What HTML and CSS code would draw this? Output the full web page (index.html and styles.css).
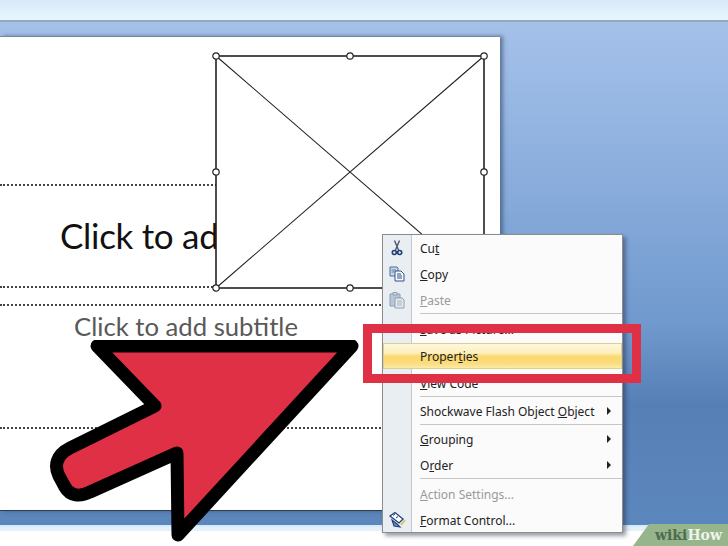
FILE: index.html
```html
<!DOCTYPE html>
<html lang="en">
<head>
<meta charset="utf-8">
<title>Properties menu</title>
<link rel="stylesheet" href="styles.css">
</head>
<body>
<div class="stage">
  <div class="topbar"></div>
  <div class="workspace">
    <div class="slide">
      <div class="placeholder title"><span>Click to add title</span></div>
      <div class="placeholder subtitle"><span>Click to add subtitle</span></div>
      <svg class="object" viewBox="0 0 280 244" aria-hidden="true">
        <rect x="6" y="6" width="268" height="232" fill="#fff" stroke="#222" stroke-width="1.6"/>
        <path d="M6 6 274 238M274 6 6 238" stroke="#222" stroke-width="1.1" fill="none"/>
        <g fill="#fff" stroke="#222" stroke-width="1.2">
          <circle cx="6" cy="6" r="3.2"/><circle cx="140" cy="6" r="3.2"/><circle cx="274" cy="6" r="3.2"/>
          <circle cx="6" cy="122" r="3.2"/><circle cx="274" cy="122" r="3.2"/>
          <circle cx="6" cy="238" r="3.2"/><circle cx="140" cy="238" r="3.2"/><circle cx="274" cy="238" r="3.2"/>
        </g>
      </svg>
    </div>
  </div>
  <div class="statusbar"></div>

  <div class="menu">
    <div class="row">
      <span class="icon"><svg viewBox="0 0 18 18" width="18" height="18"><path d="M6.5 1.5 10.5 11M11.5 1.5 7.5 11" stroke="#4c5867" stroke-width="1.4" fill="none"/><circle cx="6.3" cy="13.5" r="2" fill="none" stroke="#1d3a78" stroke-width="1.6"/><circle cx="11.7" cy="13.5" r="2" fill="none" stroke="#1d3a78" stroke-width="1.6"/></svg></span>
      <span class="label">Cu<u>t</u></span>
    </div>
    <div class="row">
      <span class="icon"><svg viewBox="0 0 18 18" width="18" height="18"><path d="M2 2H9L10 3V11H2Z" fill="#c9d8ea" stroke="#4f6c94"/><path d="M3.5 5H8M3.5 7H6" stroke="#5f7ba3"/><path d="M7 6H13L16 9V16H7Z" fill="#f6f9fd" stroke="#2f5289"/><path d="M9 9H13M9 11H14M9 13H14" stroke="#2f5289"/></svg></span>
      <span class="label"><u>C</u>opy</span>
    </div>
    <div class="row disabled">
      <span class="icon"><svg viewBox="0 0 18 18" width="18" height="18"><path d="M2 3H12V15H2Z" fill="#b9c6d6" stroke="#8d9db1"/><path d="M5 1.5H9V4H5Z" fill="#d8dfe8" stroke="#8d9db1"/><path d="M7 7H14L16 9V17H7Z" fill="#e6ebf1" stroke="#8d9db1"/><path d="M9 10H14M9 12H14M9 14H14" stroke="#a3b1c2"/></svg></span>
      <span class="label"><u>P</u>aste</span>
    </div>
    <div class="sep sep-wide"></div>
    <div class="row">
      <span class="icon"></span>
      <span class="label"><u>S</u>ave as Picture...</span>
    </div>
    <div class="row active">
      <span class="icon"></span>
      <span class="label">Proper<u>t</u>ies</span>
    </div>
    <div class="row after-active">
      <span class="icon"></span>
      <span class="label"><u>V</u>iew Code</span>
    </div>
    <div class="sep"></div>
    <div class="row">
      <span class="icon"></span>
      <span class="label">Shockwave Flash Object <u>O</u>bject</span>
      <span class="caret"></span>
    </div>
    <div class="sep"></div>
    <div class="row">
      <span class="icon"></span>
      <span class="label"><u>G</u>rouping</span>
      <span class="caret"></span>
    </div>
    <div class="row">
      <span class="icon"></span>
      <span class="label">O<u>r</u>der</span>
      <span class="caret"></span>
    </div>
    <div class="sep sep-wide"></div>
    <div class="row disabled">
      <span class="icon"></span>
      <span class="label"><u>A</u>ction Settings...</span>
    </div>
    <div class="row">
      <span class="icon"><svg viewBox="0 0 18 18" width="18" height="18"><path d="M2 5 7 1.5 15 8 11 12Z" fill="#fff" stroke="#1f3f7c" stroke-width="1.3"/><path d="M4 9 9 13 12 16 6 15Z" fill="#6f8fc4" stroke="#1f3f7c" stroke-width="1.1"/><path d="M5 4.5 7 3M8 7l2-1.5" stroke="#1f3f7c"/><path d="M13 14 17 9" stroke="#d9c24a" stroke-width="1.8"/></svg></span>
      <span class="label"><u>F</u>ormat Control...</span>
    </div>
  </div>

  <div class="callout"></div>

  <svg class="arrow" viewBox="0 0 320 210" aria-hidden="true">
    <path d="M57 6H312L138 195 137 113 50 152C40 157 30 156 25 147L19 136C14 126 16 115 30 108L115 66Z" fill="#e03046" stroke="#000" stroke-width="13" stroke-linejoin="round"/>
  </svg>

  <div class="badge"><span class="wiki">wiki</span><span class="how">How</span></div>
</div>
</body>
</html>
```
FILE: styles.css
```css
* { box-sizing: border-box; }
html, body { margin: 0; padding: 0; background: #fff; }

.stage {
  position: relative;
  width: 728px;
  height: 546px;
  overflow: hidden;
  display: flex;
  flex-direction: column;
  font-family: "Noto Sans", sans-serif;
}

.topbar {
  height: 22px;
  flex: none;
  background: linear-gradient(180deg, #d8e8f7 0%, #e8f7fe 100%);
  border-bottom: 2px solid #8eabc0;
}

.workspace {
  height: 503px;
  flex: none;
  padding-top: 14px;
  background: linear-gradient(180deg, #a5c1ea 0%, #94b5e2 20%, #7099cd 60%, #567fb6 76%, #5c87bc 100%);
}

.slide {
  position: relative;
  width: 500px;
  height: 475px;
  padding-top: 147px;
  background: #fff;
  border-top: 1px solid #75899f;
  border-bottom: 1px solid #2e3c55;
  box-shadow: 3px 0 4px rgba(40, 60, 90, 0.55);
}

.placeholder {
  width: 100%;
  border-top: 2px dotted #444;
  border-bottom: 2px dotted #444;
  white-space: nowrap;
  overflow: hidden;
  font-family: Lato, sans-serif;
}

.title {
  width: 400px;
  height: 104px;
  display: flex;
  align-items: center;
  padding: 0 0 2px 60px;
  font-size: 35px;
  letter-spacing: -0.3px;
  color: #111;
}

.subtitle {
  height: 125px;
  margin-top: 16px;
  padding-left: 74px;
  padding-top: 2px;
  font-size: 25.7px;
  line-height: 36px;
  color: #595959;
}

.object {
  position: absolute;
  left: 210px;
  top: 13px;
  width: 280px;
  height: 244px;
  overflow: visible;
}

.statusbar {
  flex: 1;
  background: #fff;
  border-top: 2px solid #d6ebfb;
  box-shadow: inset 0 4px 0 #e4f1fb;
}

.menu {
  position: absolute;
  left: 382px;
  top: 234px;
  width: 241px;
  height: 299px;
  background: linear-gradient(90deg, #e9eef2 28px, #c6c9cc 28px, #c6c9cc 29px, #fbfbfb 29px);
  border: 1px solid #8c8c8c;
  box-shadow: 3px 3px 4px rgba(30, 40, 60, 0.45);
  font-size: 12px;
  color: #222;
}

.row {
  display: flex;
  align-items: center;
  height: 26px;
}

.icon {
  width: 28px;
  height: 26px;
  flex: none;
  padding-right: 1px;
  display: flex;
  align-items: center;
  justify-content: center;
}

.label {
  flex: 1;
  padding-left: 9px;
  white-space: nowrap;
}

.disabled .label { color: #9a9a9a; }

.active {
  margin-top: 1px;
  background: linear-gradient(180deg, #fdf8e0 0%, #fdf0bc 38%, #fbd96f 52%, #fbdc7e 78%, #fcedae 100%);
  box-shadow: inset 0 0 0 1px #dccf96;
}

.after-active { margin-top: 1px; }

.caret {
  width: 0;
  height: 0;
  margin-right: 11px;
  border-left: 4px solid #222;
  border-top: 4px solid transparent;
  border-bottom: 4px solid transparent;
}

.sep {
  height: 2px;
  margin-left: 37px;
  background: linear-gradient(180deg, #c6c6c6 50%, #fbfbfb 50%);
}

.sep-wide { height: 3px; background: linear-gradient(180deg, #c6c6c6 33%, #fbfbfb 33%); }

.callout {
  position: absolute;
  left: 363px;
  top: 324px;
  width: 278px;
  height: 59px;
  border: 9px solid #e03046;
}

.arrow {
  position: absolute;
  left: 40px;
  top: 340px;
  width: 320px;
  height: 210px;
}

.badge {
  position: absolute;
  right: 0;
  bottom: 0;
  width: 95px;
  height: 22px;
  padding: 3px 0 0 22px;
  background: #96b58c;
  clip-path: polygon(16px 0, 100% 0, 100% 100%, 0 100%);
  font-family: "DejaVu Serif", serif;
  font-weight: 700;
  font-size: 14px;
  line-height: 16px;
}

.wiki { color: #4f6b52; }
.how { color: #eef3ea; }
```
